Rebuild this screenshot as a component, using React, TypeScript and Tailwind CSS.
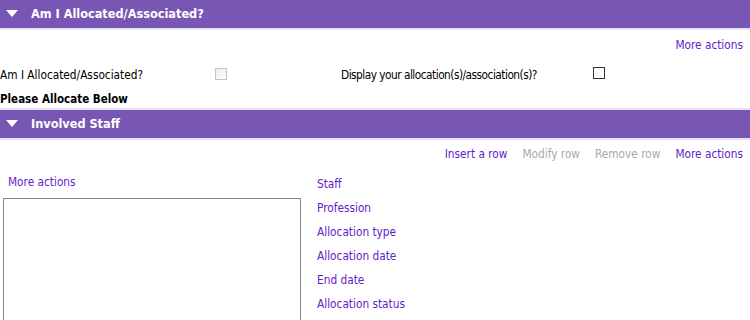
import React from "react";

const fields = ["Staff", "Profession", "Allocation type", "Allocation date", "End date", "Allocation status"];

function Caret() {
  return (
    <svg width="12" height="8" viewBox="0 0 12 8" className="shrink-0">
      <polygon points="0,0 12,0 6,7" fill="#ffffff" />
    </svg>
  );
}

function SectionHeader({ title }: { title: string }) {
  return (
    <div className="flex h-[30px] items-center border-b-2 border-[#e9e4f3] bg-[#7857b4] pl-[6px]">
      <Caret />
      <span className="ml-[13px] text-[12.6px] font-bold text-white">{title}</span>
    </div>
  );
}

export default function App() {
  return (
    <div className="h-[320px] w-[750px] overflow-hidden bg-white font-['Tahoma','DejaVu_Sans_Condensed','DejaVu_Sans',sans-serif] text-[11.75px] text-black">
      <SectionHeader title="Am I Allocated/Associated?" />

      <div className="flex h-[28px] items-center justify-end pr-[7px] pt-[4px]">
        <span className="text-[#6322c8]">More actions</span>
      </div>

      <div className="grid h-[30px] grid-cols-[215px_126px_252px_1fr] items-center pt-[6px]">
        <span>Am I Allocated/Associated?</span>
        <span className="mb-[4px] block h-[12px] w-[12px] border border-[#c4c4cc] bg-gradient-to-br from-[#ececf0] to-white" />
        <span className="tracking-[-0.5px]">Display your allocation(s)/association(s)?</span>
        <span className="mb-[7px] block h-[12px] w-[12px] border border-[#333333] bg-white" />
      </div>

      <div className="flex h-[20px] items-center pt-[4px] text-[11.5px] font-bold">Please Allocate Below</div>

      <div className="border-t-2 border-[#e9e4f3]">
        <SectionHeader title="Involved Staff" />
      </div>

      <div className="flex h-[26px] items-center justify-end gap-[15px] pr-[7px] pt-[4px]">
        <span className="text-[#6322c8]">Insert a row</span>
        <span className="text-[#a9a9a9]">Modify row</span>
        <span className="text-[#a9a9a9]">Remove row</span>
        <span className="text-[#6322c8]">More actions</span>
      </div>

      <div className="flex">
        <div className="w-[301px] pl-[3px] pt-[8px]">
          <div className="pl-[5px] leading-[16px] text-[#6322c8]">More actions</div>
          <div className="mt-[8px] h-[150px] w-[298px] border border-[#8a8a8a]" />
        </div>
        <div className="ml-[16px] flex flex-col pt-[6px]">
          {fields.map((f) => (
            <span key={f} className="leading-[24px] text-[#6322c8]">
              {f}
            </span>
          ))}
        </div>
      </div>
    </div>
  );
}
